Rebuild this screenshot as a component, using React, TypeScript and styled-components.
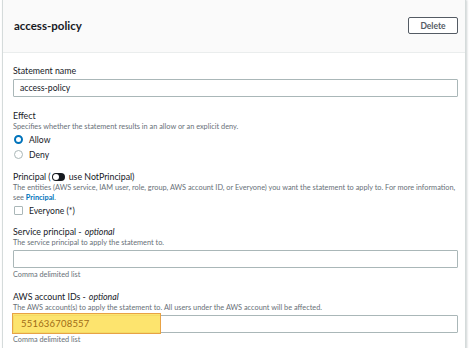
import React from 'react';
import styled, { createGlobalStyle } from 'styled-components';

const GlobalStyle = createGlobalStyle`
  html, body {
    margin: 0;
    padding: 0;
    background: #ffffff;
    font-family: Lato, "Open Sans", sans-serif;
    color: #16191f;
  }
`;

const Page = styled.div`
  width: 474px;
  height: 348px;
  overflow: hidden;
  padding-left: 2px;
  box-sizing: border-box;
`;

const Panel = styled.div`
  width: 462px;
  height: 360px;
  background: #ffffff;
  border-left: 1px solid #d5dbdb;
  border-right: 1px solid #d5dbdb;
  box-shadow: 1px 0 2px rgba(0, 28, 36, 0.2);
`;

const Header = styled.header`
  height: 53px;
  background: #fafafa;
  border-bottom: 1px solid #eaeded;
  display: flex;
  align-items: center;
  justify-content: space-between;
  padding: 0 7px 0 11px;
  box-sizing: border-box;
`;

const Title = styled.h1`
  margin: 0 0 2px;
  font-size: 11.5px;
  font-weight: 700;
  color: #16191f;
`;

const DeleteButton = styled.button`
  width: 50px;
  height: 17px;
  margin-bottom: 1px;
  background: #ffffff;
  border: 1px solid #545b64;
  border-radius: 2px;
  font-family: inherit;
  font-size: 8.5px;
  font-weight: 700;
  color: #545b64;
  padding: 0;
`;

const Body = styled.div`
  padding: 12px 7px 0 10px;
`;

const Field = styled.div<{ gap?: number }>`
  margin-bottom: ${({ gap }) => gap ?? 12}px;
`;

const Label = styled.div`
  font-size: 8.8px;
  line-height: 12px;
  height: 12px;
  color: #16191f;
  display: flex;
  align-items: center;
  white-space: nowrap;
`;

const Optional = styled.i`
  margin-left: 3px;
`;

const Description = styled.div`
  font-size: 7.35px;
  line-height: 10px;
  color: #687078;
  white-space: nowrap;
`;

const Link = styled.a`
  color: #0073bb;
  font-weight: 700;
  text-decoration: none;
`;

const Input = styled.div`
  position: relative;
  height: 16px;
  margin-top: 2px;
  border: 1px solid #aab7b8;
  border-radius: 1px;
  font-size: 8.7px;
  line-height: 16px;
  padding-left: 6px;
  color: #16191f;
`;

const Highlight = styled.div`
  position: absolute;
  left: -2px;
  top: -3px;
  width: 149px;
  height: 21px;
  background: rgba(253, 224, 90, 0.88);
  border: 1px solid #e8a245;
  box-sizing: border-box;
  font-size: 9.5px;
  line-height: 19px;
  padding-left: 8px;
  color: #a06c16;
  letter-spacing: 0.2px;
`;

const Hint = styled.div`
  font-size: 7.3px;
  line-height: 10px;
  color: #687078;
  margin-top: 2px;
`;

const OptionRow = styled.div`
  display: flex;
  align-items: center;
  gap: 6px;
  height: 15px;
  font-size: 8.6px;
`;

const Radio = styled.span<{ checked?: boolean }>`
  width: 9px;
  height: 9px;
  border-radius: 50%;
  box-sizing: border-box;
  border: ${({ checked }) => (checked ? '2.5px solid #0073bb' : '1px solid #aab7b8')};
  background: #ffffff;
  margin-left: 1px;
`;

const Checkbox = styled.span`
  width: 9px;
  height: 9px;
  border: 1px solid #aab7b8;
  border-radius: 1px;
  box-sizing: border-box;
  margin-left: 1px;
`;

const Toggle = styled.span`
  display: inline-block;
  width: 13px;
  height: 8px;
  border-radius: 4px;
  background: #16191f;
  position: relative;
  margin: 0 4px 0 1px;
  &::after {
    content: '';
    position: absolute;
    left: 1px;
    top: 1px;
    width: 6px;
    height: 6px;
    border-radius: 50%;
    background: #ffffff;
  }
`;

const App: React.FC = () => {
  return (
    <Page>
      <GlobalStyle />
      <Panel>
        <Header>
          <Title>access-policy</Title>
          <DeleteButton>Delete</DeleteButton>
        </Header>
        <Body>
          <Field gap={13}>
            <Label>Statement name</Label>
            <Input>access-policy</Input>
          </Field>

          <Field gap={9}>
            <Label>Effect</Label>
            <Description>Specifies whether the statement results in an allow or an explicit deny.</Description>
            <OptionRow>
              <Radio checked />
              Allow
            </OptionRow>
            <OptionRow>
              <Radio />
              Deny
            </OptionRow>
          </Field>

          <Field gap={8}>
            <Label>
              Principal (<Toggle />use NotPrincipal)
            </Label>
            <Description>
              The entities (AWS service, IAM user, role, group, AWS account ID, or Everyone) you want the statement to apply to. For more information,
              <br />
              see <Link>Principal</Link>.
            </Description>
            <OptionRow>
              <Checkbox />
              Everyone (*)
            </OptionRow>
          </Field>

          <Field gap={11}>
            <Label>
              Service principal -<Optional>optional</Optional>
            </Label>
            <Description>The service principal to apply the statement to.</Description>
            <Input />
            <Hint>Comma delimited list</Hint>
          </Field>

          <Field gap={0}>
            <Label>
              AWS account IDs -<Optional>optional</Optional>
            </Label>
            <Description>The AWS account(s) to apply the statement to. All users under the AWS account will be affected.</Description>
            <Input>
              <Highlight>551636708557</Highlight>
            </Input>
            <Hint>Comma delimited list</Hint>
          </Field>
        </Body>
      </Panel>
    </Page>
  );
};

export default App;
